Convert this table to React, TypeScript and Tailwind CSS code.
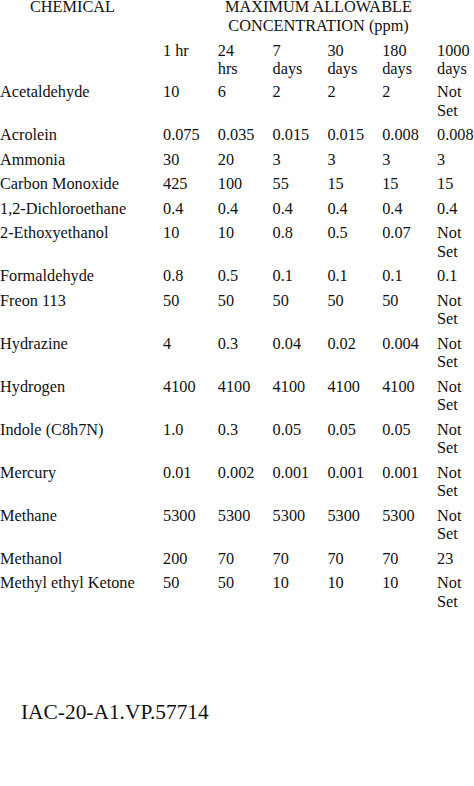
const units: [string, string][] = [
  ["1 hr", ""],
  ["24", "hrs"],
  ["7", "days"],
  ["30", "days"],
  ["180", "days"],
  ["1000", "days"],
];

const rows: [string, string[]][] = [
  ["Acetaldehyde", ["10", "6", "2", "2", "2", "Not Set"]],
  ["Acrolein", ["0.075", "0.035", "0.015", "0.015", "0.008", "0.008"]],
  ["Ammonia", ["30", "20", "3", "3", "3", "3"]],
  ["Carbon Monoxide", ["425", "100", "55", "15", "15", "15"]],
  ["1,2-Dichloroethane", ["0.4", "0.4", "0.4", "0.4", "0.4", "0.4"]],
  ["2-Ethoxyethanol", ["10", "10", "0.8", "0.5", "0.07", "Not Set"]],
  ["Formaldehyde", ["0.8", "0.5", "0.1", "0.1", "0.1", "0.1"]],
  ["Freon 113", ["50", "50", "50", "50", "50", "Not Set"]],
  ["Hydrazine", ["4", "0.3", "0.04", "0.02", "0.004", "Not Set"]],
  ["Hydrogen", ["4100", "4100", "4100", "4100", "4100", "Not Set"]],
  ["Indole (C8h7N)", ["1.0", "0.3", "0.05", "0.05", "0.05", "Not Set"]],
  ["Mercury", ["0.01", "0.002", "0.001", "0.001", "0.001", "Not Set"]],
  ["Methane", ["5300", "5300", "5300", "5300", "5300", "Not Set"]],
  ["Methanol", ["200", "70", "70", "70", "70", "23"]],
  ["Methyl ethyl Ketone", ["50", "50", "10", "10", "10", "Not Set"]],
];

const cols = "grid grid-cols-[163px_54.8px_54.8px_54.8px_54.8px_54.8px_1fr]";

export default function App() {
  return (
    <div
      className="min-h-screen w-[474px] overflow-hidden bg-white text-[#111] text-[16.3px] leading-[18.5px]"
      style={{ fontFamily: '"Liberation Serif", "Times New Roman", serif' }}
    >
      <div className="-mt-[2px]">
        {/* header */}
        <div className={`${cols} pb-[6.5px]`}>
          <div className="pl-[30px] whitespace-nowrap">CHEMICAL</div>
          <div className="col-span-6 text-center">
            MAXIMUM ALLOWABLE
            <br />
            CONCENTRATION (ppm)
          </div>
        </div>
        <div className={`${cols} pb-[4.5px]`}>
          <div />
          {units.map(([a, b], i) => (
            <div key={i} className="whitespace-nowrap">
              {a}
              {b && (
                <>
                  <br />
                  {b}
                </>
              )}
            </div>
          ))}
        </div>

        {/* data */}
        {rows.map(([name, vals]) => (
          <div key={name} className={`${cols} pb-[6px]`}>
            <div className="whitespace-nowrap">{name}</div>
            {vals.map((v, i) => (
              <div key={i} className={i === 5 ? "w-[34px]" : "whitespace-nowrap"}>
                {v}
              </div>
            ))}
          </div>
        ))}
      </div>

      <div className="mt-[83px] pl-[21px] text-[21.4px] leading-[24px]">IAC-20-A1.VP.57714</div>
    </div>
  );
}
